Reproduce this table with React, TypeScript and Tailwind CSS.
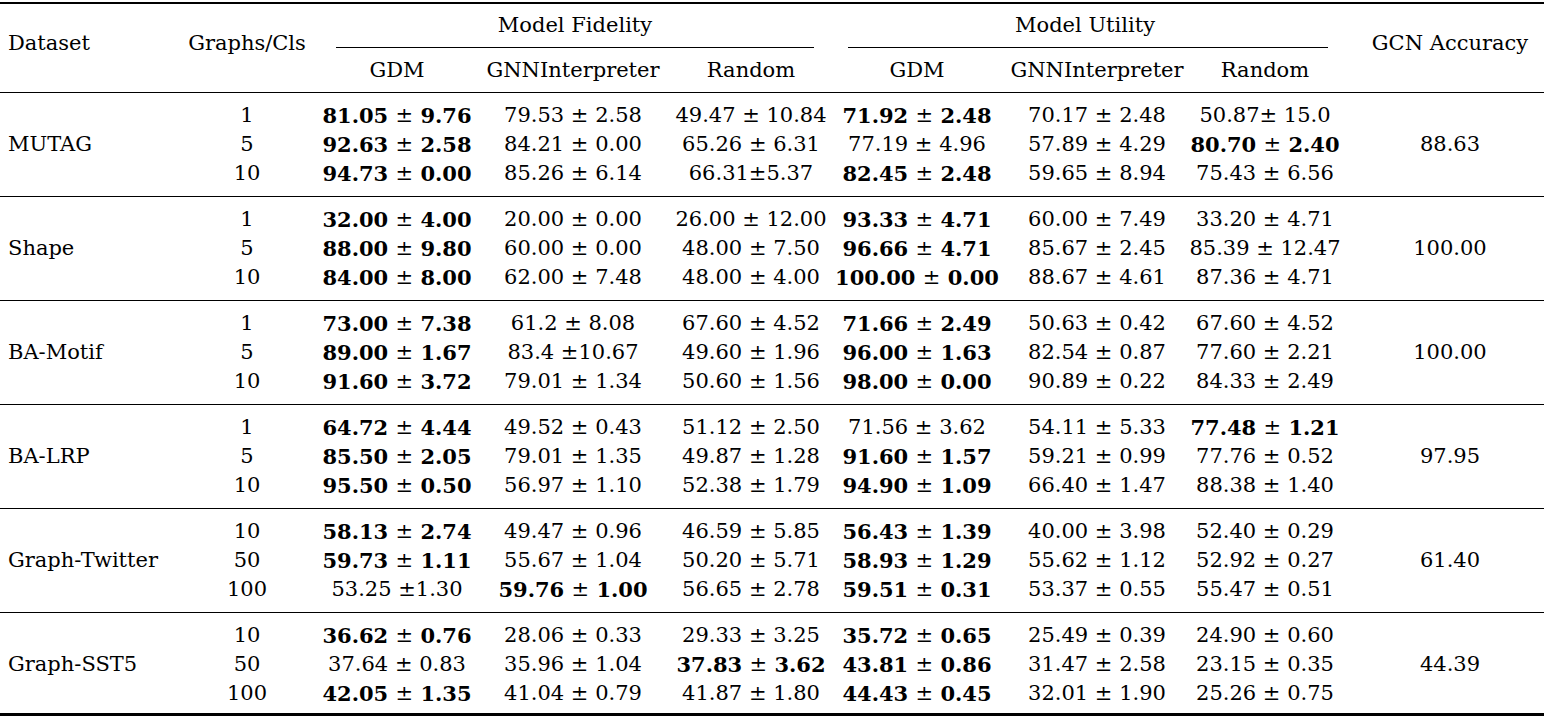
import React from 'react';

type Group = {
    name: string;
    gcn: string;
    rows: string[][];
};

// "*" in front of a cell marks the bold (best) result
const groups: Group[] = [
    {
        name: 'MUTAG',
        gcn: '88.63',
        rows: [
            ['1', '*81.05 ± 9.76', '79.53 ± 2.58', '49.47 ± 10.84', '*71.92 ± 2.48', '70.17 ± 2.48', '50.87± 15.0'],
            ['5', '*92.63 ± 2.58', '84.21 ± 0.00', '65.26 ± 6.31', '77.19 ± 4.96', '57.89 ± 4.29', '*80.70 ± 2.40'],
            ['10', '*94.73 ± 0.00', '85.26 ± 6.14', '66.31±5.37', '*82.45 ± 2.48', '59.65 ± 8.94', '75.43 ± 6.56'],
        ],
    },
    {
        name: 'Shape',
        gcn: '100.00',
        rows: [
            ['1', '*32.00 ± 4.00', '20.00 ± 0.00', '26.00 ± 12.00', '*93.33 ± 4.71', '60.00 ± 7.49', '33.20 ± 4.71'],
            ['5', '*88.00 ± 9.80', '60.00 ± 0.00', '48.00 ± 7.50', '*96.66 ± 4.71', '85.67 ± 2.45', '85.39 ± 12.47'],
            ['10', '*84.00 ± 8.00', '62.00 ± 7.48', '48.00 ± 4.00', '*100.00 ± 0.00', '88.67 ± 4.61', '87.36 ± 4.71'],
        ],
    },
    {
        name: 'BA-Motif',
        gcn: '100.00',
        rows: [
            ['1', '*73.00 ± 7.38', '61.2 ± 8.08', '67.60 ± 4.52', '*71.66 ± 2.49', '50.63 ± 0.42', '67.60 ± 4.52'],
            ['5', '*89.00 ± 1.67', '83.4 ±10.67', '49.60 ± 1.96', '*96.00 ± 1.63', '82.54 ± 0.87', '77.60 ± 2.21'],
            ['10', '*91.60 ± 3.72', '79.01 ± 1.34', '50.60 ± 1.56', '*98.00 ± 0.00', '90.89 ± 0.22', '84.33 ± 2.49'],
        ],
    },
    {
        name: 'BA-LRP',
        gcn: '97.95',
        rows: [
            ['1', '*64.72 ± 4.44', '49.52 ± 0.43', '51.12 ± 2.50', '71.56 ± 3.62', '54.11 ± 5.33', '*77.48 ± 1.21'],
            ['5', '*85.50 ± 2.05', '79.01 ± 1.35', '49.87 ± 1.28', '*91.60 ± 1.57', '59.21 ± 0.99', '77.76 ± 0.52'],
            ['10', '*95.50 ± 0.50', '56.97 ± 1.10', '52.38 ± 1.79', '*94.90 ± 1.09', '66.40 ± 1.47', '88.38 ± 1.40'],
        ],
    },
    {
        name: 'Graph-Twitter',
        gcn: '61.40',
        rows: [
            ['10', '*58.13 ± 2.74', '49.47 ± 0.96', '46.59 ± 5.85', '*56.43 ± 1.39', '40.00 ± 3.98', '52.40 ± 0.29'],
            ['50', '*59.73 ± 1.11', '55.67 ± 1.04', '50.20 ± 5.71', '*58.93 ± 1.29', '55.62 ± 1.12', '52.92 ± 0.27'],
            ['100', '53.25 ±1.30', '*59.76 ± 1.00', '56.65 ± 2.78', '*59.51 ± 0.31', '53.37 ± 0.55', '55.47 ± 0.51'],
        ],
    },
    {
        name: 'Graph-SST5',
        gcn: '44.39',
        rows: [
            ['10', '*36.62 ± 0.76', '28.06 ± 0.33', '29.33 ± 3.25', '*35.72 ± 0.65', '25.49 ± 0.39', '24.90 ± 0.60'],
            ['50', '37.64 ± 0.83', '35.96 ± 1.04', '*37.83 ± 3.62', '*43.81 ± 0.86', '31.47 ± 2.58', '23.15 ± 0.35'],
            ['100', '*42.05 ± 1.35', '41.04 ± 0.79', '41.87 ± 1.80', '*44.43 ± 0.45', '32.01 ± 1.90', '25.26 ± 0.75'],
        ],
    },
];

const cols = 'grid grid-cols-[158px_178px_122px_230px_126px_206px_154px_182px_188px]';

const Value = ({ text }: { text: string }) => {
    if (!text.startsWith('*')) return <>{text}</>;
    const [mean, std] = text.slice(1).split('±');
    return (
        <>
            <span className="font-bold">{mean}</span>±<span className="font-bold">{std}</span>
        </>
    );
};

const Cell = ({ children }: { children: React.ReactNode }) => (
    <div className="flex items-center justify-center whitespace-pre">{children}</div>
);

const App = () => {
    return (
        <div className="w-[1544px] h-[720px] bg-white text-black font-['DejaVu_Serif',serif] text-[21px] leading-[29px]">
            <div className="h-[2px]" />
            <div className="h-[2px] bg-black" />

            <div className={`${cols} grid-rows-[43px_1px_44px]`}>
                <div className="row-span-3 flex items-center pl-2 pb-[10px]">Dataset</div>
                <div className="row-span-3 flex items-center justify-center pb-[10px]">Graphs/Cls</div>
                <div className="col-span-3 flex items-center justify-center">Model Fidelity</div>
                <div className="col-span-3 flex items-center justify-center">Model Utility</div>
                <div className="row-span-3 flex items-center justify-center pb-[10px]">GCN Accuracy</div>
                <div className="col-span-3 bg-black" />
                <div className="col-span-3 bg-black ml-[34px] mr-[28px]" />
                <Cell>GDM</Cell>
                <Cell>GNNInterpreter</Cell>
                <Cell>Random</Cell>
                <Cell>GDM</Cell>
                <Cell>GNNInterpreter</Cell>
                <Cell>Random</Cell>
            </div>

            {groups.map((g, gi) => (
                <div key={g.name}>
                    <div className="h-px bg-black" />
                    <div className={`${cols} auto-rows-[29px] pt-2 ${gi === groups.length - 1 ? 'pb-[5px]' : 'pb-2'}`}>
                        <div className="row-span-3 flex items-center pl-2">{g.name}</div>
                        <div className="col-start-9 row-start-1 row-span-3 flex items-center justify-center">{g.gcn}</div>
                        {g.rows.map(row =>
                            row.map((v, ci) => (
                                <Cell key={`${row[0]}-${ci}`}>
                                    <Value text={v} />
                                </Cell>
                            ))
                        )}
                    </div>
                </div>
            ))}
            <div className="h-[3px] bg-black" />
        </div>
    );
};

export default App;
